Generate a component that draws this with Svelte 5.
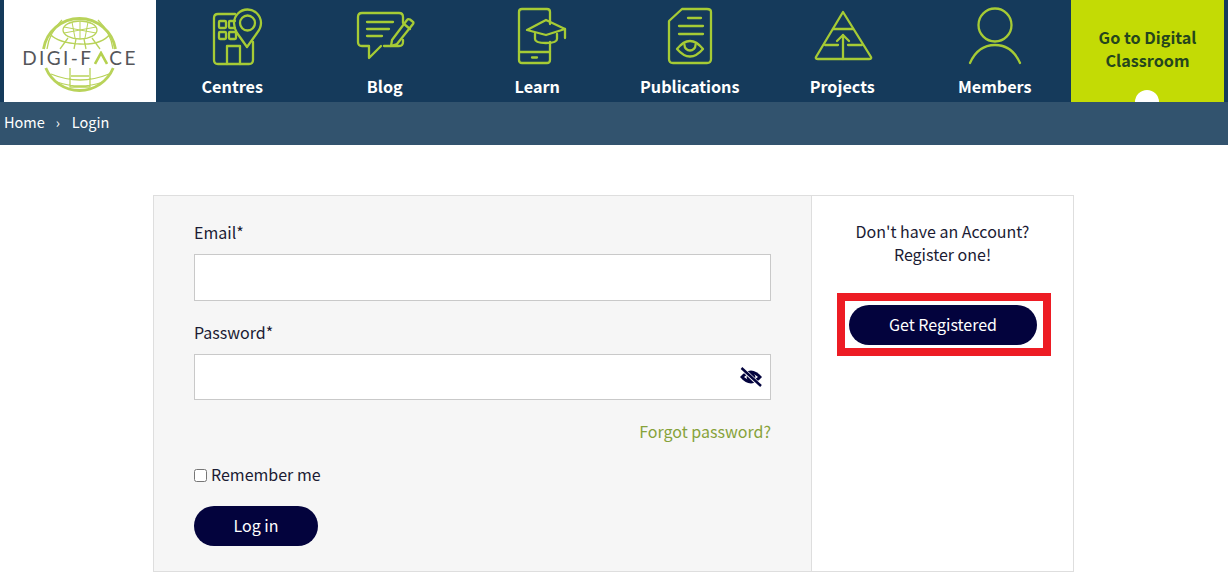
<script>
  const navItems = [
    { label: 'Centres', view: '200 4 64 64', icon: 'centres' },
    { label: 'Blog', view: '353 4 64 64', icon: 'blog' },
    { label: 'Learn', view: '505 4 64 64', icon: 'learn' },
    { label: 'Publications', view: '658 4 64 64', icon: 'publications' },
    { label: 'Projects', view: '810 4 64 64', icon: 'projects' },
    { label: 'Members', view: '963 4 64 64', icon: 'members' }
  ];
</script>

<div class="page">
  <header class="nav">
    <a class="logo" href="#home" aria-label="Digi-Face">
      <svg class="globe" viewBox="0 0 152 102" aria-hidden="true">
        <g fill="none" stroke="#b9d35a" stroke-width="1.3">
          <path d="M39.500 49A36.500 36.500 0 0 1 111.500 49" stroke-width="2.800" />
          <path d="M41.800 68A36.500 36.500 0 0 0 109.200 68" stroke-width="2.800" />
          <ellipse cx="76" cy="30" rx="17" ry="9" />
          <path d="M76 21V39M68 22l3 16M84 22l-3 16M60 27l32 6M92 27l-32 6" stroke-width="1" />
          <path d="M46 34q8 9 30 10t30-10M58 20q-13 13-15 29M94 20q13 13 15 29M64 38 56 49M88 38l8 11M72 39l-2 10M80 39l2 10" />
          <path d="M66 68V87H86V68M67 76H85M47 74q29 12 58 0M53 82q23 8 46 0" />
        </g>
      </svg>
      <span class="wordmark">DIGI-F<svg class="caret" viewBox="0 0 14 14" aria-hidden="true"><path d="M1 13 7 2l6 11" fill="none" stroke="#b5d14f" stroke-width="2.600" /></svg>CE</span>
    </a>

    <ul class="items">
      {#each navItems as item}
        <li>
          <a href="#{item.icon}" class="item">
            <svg class="icon" viewBox={item.view} aria-hidden="true">
              <g fill="none" stroke="#a6cb35" stroke-width="2.300" stroke-linecap="round" stroke-linejoin="round">
                {#if item.icon === 'centres'}
                  <path d="M235 14H218q-4 0-4 4V60q0 4 4 4H249q4 0 4-4V42" />
                  <rect x="219" y="21" width="7" height="7" rx="1" />
                  <path d="M235 21h-5q-1 0-1 1v5q0 1 1 1h5" />
                  <rect x="219" y="32" width="7" height="7" rx="1" />
                  <rect x="229" y="32" width="7" height="7" rx="1" />
                  <path d="M227 64V46H240V64" />
                  <path d="M247 47 237 33Q234 28 234 23A13.500 13.500 0 0 1 261 23Q261 28 257 33Z" />
                  <circle cx="247.500" cy="23" r="7.500" />
                {:else if item.icon === 'blog'}
                  <path d="M403 23V17q0-4-4-4H362q-4 0-4 4V42q0 4 4 4h7v12l12-12" />
                  <path d="M384 46H399q4 0 4-4V40" />
                  <path d="M367 22h26M367 29h22M367 36h15" />
                  <path d="M392 40 407 20q1-1.500 3-.5l2.500 2q1.500 1 .5 2.500L397 44l-6 2z" />
                  <path d="M404 24l6 5" />
                {:else if item.icon === 'learn'}
                  <path d="M550 24V12q0-3-3-3H522q-3 0-3 3V60q0 3 3 3H547q3 0 3-3V42" />
                  <path d="M519 52H550M532 57.500h5" />
                  <path d="M527 30 546 20 565 29 546 35z" />
                  <path d="M535 34v5q0 4 11 4t11-4v-5M565 29V38" />
                {:else if item.icon === 'publications'}
                  <path d="M682 9H707q4 0 4 3V59q0 4-4 4H673q-4 0-4-4V21z" />
                  <path d="M688 18h13M679 26h24M679 34h24" />
                  <path d="M677 49Q690 33 703 49 690 64 677 49z" />
                  <path d="M684.500 45a5.500 5.500 0 1 0 11 0" />
                {:else if item.icon === 'projects'}
                  <path d="M843 12 871 57q1 2-2 2H818q-3 0-2-2z" />
                  <path d="M833 29H853M825 45H838M848 45H862M843 59V35M837 41l6-6 6 6" />
                {:else}
                  <circle cx="995" cy="25" r="16.500" />
                  <path d="M970 63Q978 45 995 45T1020 63" />
                {/if}
              </g>
            </svg>
            <span class="label">{item.label}</span>
          </a>
        </li>
      {/each}
    </ul>

    <a class="cta" href="#classroom">
      <span>Go to Digital<br />Classroom</span>
      <i class="dot"></i>
    </a>
  </header>

  <nav class="crumbs">
    <a href="#home">Home</a>
    <span class="sep">›</span>
    <a href="#login">Login</a>
  </nav>

  <main class="card">
    <form class="login">
      <label class="field" for="email">Email*</label>
      <input id="email" class="input email" type="email" />

      <label class="field" for="password">Password*</label>
      <div class="pw">
        <input id="password" class="input password" type="password" />
        <svg class="eye" viewBox="0 0 24 20" aria-hidden="true">
          <path d="M1 10Q12-3 23 10 12 23 1 10z" fill="#03033d" />
          <path d="M5 10Q12 3.500 19 10 12 16.500 5 10z" fill="#fff" />
          <circle cx="12" cy="10" r="4.400" fill="#03033d" />
          <path d="M3 1.500 21 18.500" stroke="#fff" stroke-width="4" />
          <path d="M2.500 1 22 19" stroke="#03033d" stroke-width="2.400" />
        </svg>
      </div>

      <div class="forgot"><a href="#forgot">Forgot password?</a></div>

      <label class="remember"><input type="checkbox" /> <span>Remember me</span></label>

      <button class="btn login-btn" type="button">Log in</button>
    </form>

    <aside class="register">
      <p>Don't have an Account?<br />Register one!</p>
      <div class="highlight">
        <button class="btn reg-btn" type="button">Get Registered</button>
      </div>
    </aside>
  </main>
</div>

<style>
  :global(body) {
    margin: 0;
    background: #fff;
  }

  .page {
    font-family: "Noto Sans CJK SC", "Source Sans Pro", "Noto Sans", sans-serif;
    font-size: 16px;
    color: #1b1b33;
  }

  a {
    text-decoration: none;
    color: inherit;
  }

  .nav {
    display: flex;
    height: 102px;
    background: #153a5b;
    padding: 0 4px;
  }

  .logo {
    position: relative;
    flex: 0 0 152px;
    background: #fff;
    display: block;
  }

  .globe {
    position: absolute;
    inset: 0;
    width: 152px;
    height: 102px;
  }

  .wordmark {
    position: absolute;
    left: 0;
    right: 0;
    top: 47px;
    text-align: center;
    font-family: "Lato", "Open Sans", sans-serif;
    font-size: 19px;
    line-height: 22px;
    letter-spacing: 2.400px;
    color: #55565a;
    white-space: nowrap;
  }

  .caret {
    width: 14px;
    height: 14px;
    margin: 0 1px;
  }

  .items {
    display: flex;
    flex: 0 0 915px;
    margin: 0;
    padding: 0;
    list-style: none;
  }

  .items li {
    flex: 1;
  }

  .item {
    display: flex;
    flex-direction: column;
    align-items: center;
    height: 100%;
  }

  .icon {
    width: 64px;
    height: 64px;
    margin-top: 4px;
  }

  .label {
    margin-top: 6px;
    font-size: 16.200px;
    line-height: 24px;
    font-weight: 700;
    color: #fff;
  }

  .cta {
    position: relative;
    flex: 1;
    background: #c3db05;
    overflow: hidden;
    display: flex;
    justify-content: center;
    padding-top: 26px;
    box-sizing: border-box;
    text-align: center;
    font-size: 16.200px;
    line-height: 23px;
    font-weight: 700;
    color: #25461d;
  }

  .dot {
    position: absolute;
    left: 64px;
    top: 90px;
    width: 24px;
    height: 24px;
    border-radius: 50%;
    background: #fff;
  }

  .crumbs {
    display: flex;
    align-items: center;
    box-sizing: border-box;
    height: 43px;
    padding: 0 4px 3px;
    background: #32536e;
    color: #fff;
    font-size: 14.500px;
    line-height: 22px;
  }

  .sep {
    width: 12px;
    margin: 0 8px 0 7px;
    text-align: center;
    font-size: 14px;
  }

  .card {
    display: flex;
    width: 921px;
    height: 377px;
    box-sizing: border-box;
    margin: 50px 0 0 153px;
    border: 1px solid #dedede;
  }

  .login {
    flex: 0 0 658px;
    box-sizing: border-box;
    background: #f6f6f6;
    border-right: 1px solid #dedede;
    padding: 25px 40px 0;
  }

  .field {
    display: block;
    line-height: 22px;
    margin-bottom: 11px;
  }

  .input {
    display: block;
    box-sizing: border-box;
    width: 577px;
    background: #fff;
    border: 1px solid #c9c9c9;
    border-radius: 0;
    padding: 0 10px;
    outline: none;
  }

  .email {
    height: 47px;
    margin-bottom: 20px;
  }

  .password {
    height: 46px;
  }

  .pw {
    position: relative;
  }

  .eye {
    position: absolute;
    right: 8px;
    top: 13px;
    width: 24px;
    height: 20px;
  }

  .forgot {
    margin-top: 20px;
    text-align: right;
    line-height: 22px;
    height: 24px;
  }

  .forgot a {
    color: #86a23a;
  }

  .remember {
    display: flex;
    align-items: center;
    gap: 4px;
    margin-top: 19px;
    height: 24px;
  }

  .remember span {
    line-height: 22px;
    margin-bottom: 2px;
  }

  .remember input {
    width: 13px;
    height: 13px;
    margin: 0;
  }

  .btn {
    display: block;
    box-sizing: border-box;
    height: 40px;
    padding: 0 0 2px;
    border: 0;
    border-radius: 20px;
    background: #03033d;
    color: #fff;
    font: inherit;
    cursor: pointer;
  }

  .login-btn {
    width: 124px;
    margin-top: 19px;
  }

  .register {
    flex: 1;
    padding-top: 24px;
    display: flex;
    flex-direction: column;
    align-items: center;
    background: #fff;
  }

  .register p {
    margin: 0;
    text-align: center;
    line-height: 23px;
  }

  .highlight {
    align-self: flex-start;
    margin: 27px 0 0 25px;
    border: 8px solid #ed1c24;
    padding: 4px 6px 3px 4px;
  }

  .reg-btn {
    width: 188px;
  }
</style>
